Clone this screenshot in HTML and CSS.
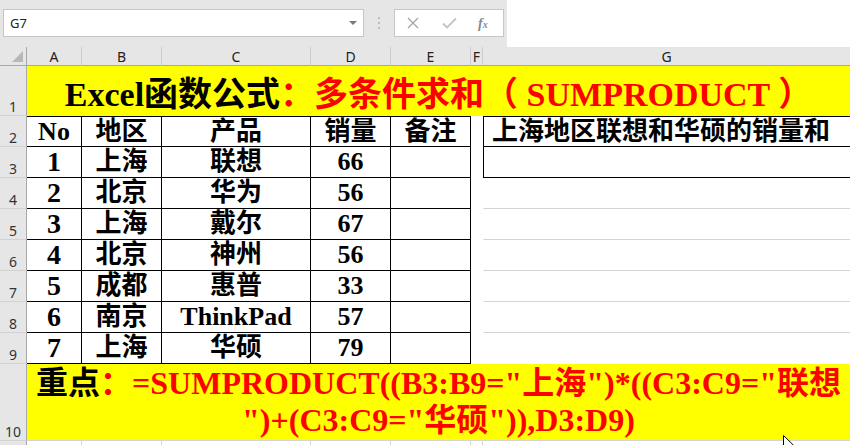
FILE: index.html
```html
<!DOCTYPE html>
<html lang="zh">
<head>
<meta charset="utf-8">
<title>Excel</title>
<link rel="stylesheet" href="styles.css">
</head>
<body>
<div class="fbar">
  <div class="namebox"><span>G7</span><span class="arrow"></span></div>
  <div class="grip"><i></i><i></i><i></i></div>
  <div class="fxbox">
    <svg class="ic-x" width="12" height="12" viewBox="0 0 12 12"><path d="M1 1L11 11M11 1L1 11" stroke="#a6a6a6" stroke-width="1.3" fill="none"/></svg>
    <svg class="ic-ok" width="15" height="12" viewBox="0 0 15 12"><path d="M1 6.5L5 10.5L14 1.5" stroke="#c4c4c4" stroke-width="1.8" fill="none"/></svg>
    <span class="fx"><span class="fx-f">f</span><span class="fx-x">x</span></span>
  </div>
  <div class="fspacer"></div>
  <div class="finput"></div>
</div>

<div class="sheet">
  <div class="corner"><span class="tri"></span></div>
  <div class="ch">A</div>
  <div class="ch">B</div>
  <div class="ch">C</div>
  <div class="ch">D</div>
  <div class="ch">E</div>
  <div class="ch">F</div>
  <div class="ch ch-last">G</div>

  <div class="rh">1</div>
  <div class="title"><p class="line">Excel函数公式<span class="red">：多条件求和（ SUMPRODUCT ）</span></p></div>

  <div class="rh">2</div>
  <div class="c top">No</div>
  <div class="c top">地区</div>
  <div class="c top">产品</div>
  <div class="c top">销量</div>
  <div class="c top">备注</div>
  <div class="blank"></div>
  <div class="g g-head">上海地区联想和华硕的销量和</div>

  <div class="rh">3</div>
  <div class="c num">1</div><div class="c">上海</div><div class="c">联想</div><div class="c">66</div><div class="c"></div>
  <div class="blank"></div><div class="g g-box"></div>

  <div class="rh">4</div>
  <div class="c num">2</div><div class="c">北京</div><div class="c">华为</div><div class="c">56</div><div class="c"></div>
  <div class="blank"></div><div class="g g-grid"></div>

  <div class="rh">5</div>
  <div class="c num">3</div><div class="c">上海</div><div class="c">戴尔</div><div class="c">67</div><div class="c"></div>
  <div class="blank"></div><div class="g g-grid"></div>

  <div class="rh">6</div>
  <div class="c num">4</div><div class="c">北京</div><div class="c">神州</div><div class="c">56</div><div class="c"></div>
  <div class="blank"></div><div class="g g-grid"></div>

  <div class="rh">7</div>
  <div class="c num">5</div><div class="c">成都</div><div class="c">惠普</div><div class="c">33</div><div class="c"></div>
  <div class="blank"></div><div class="g g-grid"></div>

  <div class="rh">8</div>
  <div class="c num">6</div><div class="c">南京</div><div class="c">ThinkPad</div><div class="c">57</div><div class="c"></div>
  <div class="blank"></div><div class="g g-grid"></div>

  <div class="rh">9</div>
  <div class="c num">7</div><div class="c">上海</div><div class="c">华硕</div><div class="c">79</div><div class="c"></div>
  <div class="blank"></div><div class="g"></div>

  <div class="rh">10</div>
  <div class="note"><p class="line">重点<span class="red">：=SUMPRODUCT((B3:B9="上海")*((C3:C9="联想<br>")+(C3:C9="华硕")),D3:D9)</span></p></div>

  <div class="rh rh-last"></div>
  <div class="gl"></div><div class="gl"></div><div class="gl"></div><div class="gl"></div><div class="gl"></div><div class="gl"></div><div class="gl gl-last"></div>
</div>

<svg class="cursor" width="13" height="19" viewBox="0 0 13 19"><path d="M0.5 0.5L0.5 15.5L4.2 12L7 18L9.2 17L6.5 11.2L11.5 11.2Z" fill="#fff" stroke="#000" stroke-width="1"/></svg>
</body>
</html>
```

FILE: styles.css
```css
* { box-sizing: border-box; }

body {
  margin: 0;
  width: 850px;
  height: 445px;
  overflow: hidden;
  background: #fff;
  font-family: "Noto Sans", "Open Sans", sans-serif;
  position: relative;
}

/* ---------- formula bar ---------- */
.fbar {
  display: flex;
  height: 47px;
  background: #e6e6e6;
}
.namebox {
  margin: 9px 0 0 3px;
  width: 361px;
  height: 28px;
  background: #fff;
  border: 1px solid #c6c6c6;
  display: flex;
  align-items: center;
  justify-content: space-between;
  padding: 0 6px 0 6px;
  font-size: 13px;
  color: #222;
}
.arrow {
  width: 0;
  height: 0;
  border-left: 4px solid transparent;
  border-right: 4px solid transparent;
  border-top: 4px solid #7a7a7a;
}
.grip {
  width: 30px;
  height: 28px;
  margin-top: 9px;
  display: flex;
  flex-direction: column;
  align-items: center;
  justify-content: center;
  gap: 3px;
}
.grip i {
  display: block;
  width: 2px;
  height: 2px;
  background: #bdbdbd;
}
.fxbox {
  margin-top: 9px;
  width: 110px;
  height: 28px;
  background: #fff;
  border: 1px solid #c6c6c6;
  display: flex;
  align-items: center;
  padding-left: 12px;
}
.ic-x { margin-right: 23px; }
.ic-ok { margin-right: 21px; }
.fx {
  font-family: "Liberation Serif", serif;
  font-style: italic;
  font-weight: 700;
  color: #7f8a94;
  line-height: 1;
}
.fx-f { font-size: 14px; }
.fx-x { font-size: 10px; }
.fspacer { width: 3px; }
.finput { flex: 1; background: #fff; }

/* ---------- sheet grid ---------- */
.sheet {
  display: grid;
  grid-template-columns: 27px 55px 80px 149px 80px 80px 12px 367px;
  grid-template-rows: 19px 50px 31px repeat(7, 31px) 77px 10px;
}

.corner {
  background: #e6e6e6;
  border-right: 1px solid #a8a8a8;
  border-bottom: 1px solid #a8a8a8;
  position: relative;
}
.tri {
  position: absolute;
  right: 3px;
  bottom: 3px;
  width: 0;
  height: 0;
  border-left: 11px solid transparent;
  border-bottom: 11px solid #b8b8b8;
}

.ch {
  background: #e6e6e6;
  border-right: 1px solid #cdcdcd;
  border-bottom: 1px solid #a8a8a8;
  font-size: 14px;
  color: #222;
  display: flex;
  align-items: center;
  justify-content: center;
  line-height: 1;
  padding-top: 2px;
}
.ch-last { border-right: none; }

.rh {
  background: #e6e6e6;
  border-right: 1px solid #a8a8a8;
  border-bottom: 1px solid #d2d2d2;
  font-size: 14px;
  color: #333;
  display: flex;
  align-items: flex-end;
  justify-content: center;
  line-height: 1;
  padding-bottom: 1px;
}
.rh-last { border-bottom: none; }

.line { margin: 0; }

.title {
  grid-column: 2 / span 7;
  background: #ffff00;
  font-family: "Liberation Serif", "Noto Sans CJK SC", serif;
  font-weight: 700;
  font-size: 34px;
  color: #000;
  display: flex;
  align-items: center;
  justify-content: center;
  white-space: nowrap;
}
.red { color: #ff0000; }

.c {
  font-family: "Liberation Serif", "Noto Sans CJK SC", serif;
  font-weight: 700;
  font-size: 26px;
  color: #000;
  border-right: 1px solid #000;
  border-bottom: 1px solid #000;
  display: flex;
  align-items: center;
  justify-content: center;
  line-height: 1;
  white-space: nowrap;
}
.c.top { border-top: 1px solid #000; }
.c.num { font-size: 28px; }

.blank { background: #fff; }

.g {
  border-left: 1px solid transparent;
  background: #fff;
}
.g-head {
  border-left: 1px solid #000;
  border-top: 1px solid #000;
  border-bottom: 1px solid #000;
  font-family: "Liberation Serif", "Noto Sans CJK SC", serif;
  font-weight: 700;
  font-size: 26px;
  color: #000;
  display: flex;
  align-items: center;
  padding-left: 8px;
  line-height: 1;
  white-space: nowrap;
}
.g-box {
  border-left: 1px solid #000;
  border-bottom: 1px solid #000;
}
.g-grid { border-bottom: 1px solid #d4d4d4; }

.note {
  grid-column: 2 / span 7;
  background: #ffff00;
  border-bottom: 1px solid #d4d4d4;
  font-family: "Liberation Serif", "Noto Sans CJK SC", serif;
  font-weight: 700;
  font-size: 32px;
  line-height: 37px;
  color: #000;
  display: flex;
  align-items: center;
  justify-content: center;
  text-align: center;
  white-space: nowrap;
}

.gl {
  background: #fff;
  border-right: 1px solid #d4d4d4;
}
.gl-last { border-right: none; }

.cursor {
  position: absolute;
  left: 783px;
  top: 435px;
}
```
